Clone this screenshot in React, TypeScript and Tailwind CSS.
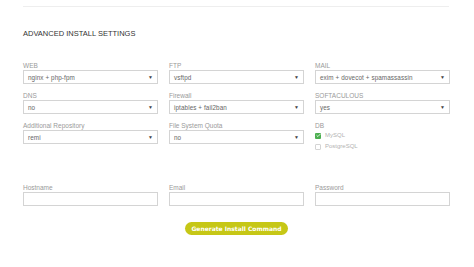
import { Check } from "lucide-react";

const Select = ({ value }: { value: string }) => (
  <div className="flex h-[14px] items-center justify-between border border-[#d4d4d4] bg-white pl-[4px] pr-[4px] text-[6.3px] tracking-[0.1px] text-[#666]">
    <span>{value}</span>
    <span className="text-[5px] text-[#444]">▼</span>
  </div>
);

const Field = ({ label, children }: { label: string; children: React.ReactNode }) => (
  <div className="flex flex-col">
    <label className="h-[9px] text-[6.5px] leading-[9px] text-[#9a9a9a]">{label}</label>
    {children}
  </div>
);

const Input = () => <div className="h-[14px] border border-[#d4d4d4] bg-white" />;

const Box = ({ on, label }: { on?: boolean; label: string }) => (
  <div className="flex h-[11px] items-center gap-[4px]">
    {on ? (
      <span className="flex h-[6px] w-[6px] items-center justify-center rounded-[1px] bg-[#4caf50]">
        <Check className="h-[5px] w-[5px] text-white" strokeWidth={4} />
      </span>
    ) : (
      <span className="h-[6px] w-[6px] rounded-[1px] border border-[#d4d4d4] bg-white" />
    )}
    <span className="text-[6px] text-[#b3b3b3]">{label}</span>
  </div>
);

export default function App() {
  return (
    <div className="min-h-[267px] w-[474px] bg-white pt-[6px] font-['Liberation_Sans',Arial,sans-serif]">
      <div className="ml-[23px] w-[426px] border-t border-[#eeeeee]" />
      <div className="ml-[23px] w-[427px]">
        <h2 className="mt-[21px] text-[7.5px] font-medium text-[#333]">
          ADVANCED INSTALL SETTINGS
        </h2>
        <div className="mt-[22px] grid grid-cols-3 gap-x-[11px] gap-y-[7px]">
          <Field label="WEB"><Select value="nginx + php-fpm" /></Field>
          <Field label="FTP"><Select value="vsftpd" /></Field>
          <Field label="MAIL"><Select value="exim + dovecot + spamassassin" /></Field>
          <Field label="DNS"><Select value="no" /></Field>
          <Field label="Firewall"><Select value="iptables + fail2ban" /></Field>
          <Field label="SOFTACULOUS"><Select value="yes" /></Field>
          <Field label="Additional Repository"><Select value="remi" /></Field>
          <Field label="File System Quota"><Select value="no" /></Field>
          <Field label="DB">
            <Box on label="MySQL" />
            <Box label="PostgreSQL" />
          </Field>
        </div>
        <div className="mt-[31px] grid grid-cols-3 gap-x-[11px]">
          <Field label="Hostname"><Input /></Field>
          <Field label="Email"><Input /></Field>
          <Field label="Password"><Input /></Field>
        </div>
        <div className="mt-[16px] flex justify-center">
          <button className="h-[13px] w-[103px] rounded-full bg-[#c6c716] font-['DejaVu_Sans',sans-serif] text-[6px] font-bold text-white">
            Generate Install Command
          </button>
        </div>
      </div>
    </div>
  );
}
